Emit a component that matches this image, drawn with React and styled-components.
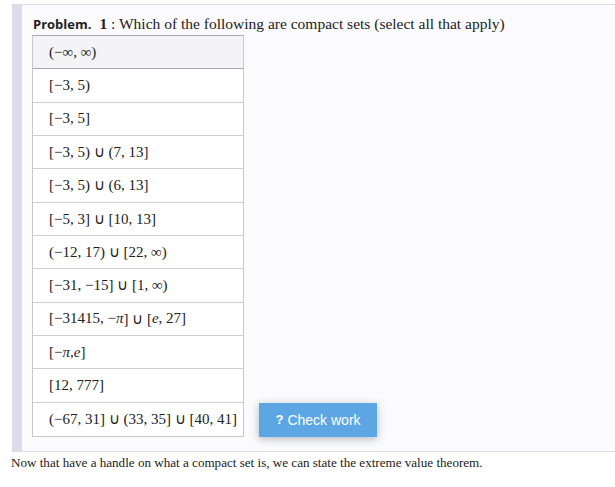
import React from "react";
import styled, { createGlobalStyle } from "styled-components";

const GlobalStyle = createGlobalStyle`
    body {
        margin: 0;
        background: #ffffff;
        font-family: "Liberation Serif", serif;
        color: #222;
    }
`;

// 문제 패널
const Panel = styled.div`
    margin: 4px 0 0 12px;
    background-color: #fbfbfd;
    border-top: 1px solid #dcdcec;
    border-bottom: 1px solid #dcdcec;
    border-left: 10px solid #dcdcec;
    padding: 10px 0 14px 10px;
`;

const Heading = styled.div`
    font-size: 15.5px;
    line-height: 18px;
    margin-bottom: 2px;
    margin-left: 1px;
    color: #222;
`;

const Label = styled.b`
    font-family: "Open Sans", "Liberation Sans", sans-serif;
    font-weight: 700;
    font-size: 13px;
    margin-right: 8px;
`;

const Num = styled.b`
    font-weight: 700;
`;

const Body = styled.div`
    display: flex;
    align-items: flex-end;
    gap: 15px;
`;

const Options = styled.div`
    width: 212px;
    box-sizing: border-box;
    border: 1px solid #c8c8c8;
    border-top-color: #aaa;
`;

const Option = styled.div`
    height: 33.33px;
    box-sizing: border-box;
    display: flex;
    align-items: center;
    padding-left: 16px;
    font-size: 15px;
    background-color: ${(p) => (p.$head ? "#f4f4f7" : "#ffffff")};
    border-bottom: 1px solid ${(p) => (p.$head ? "#aaa" : "#cfcfcf")};
    &:last-child {
        border-bottom: none;
    }
`;

const CheckButton = styled.button`
    width: 118px;
    height: 34px;
    margin-bottom: 0px;
    border: none;
    background-color: #5ca6e4;
    color: #ffffff;
    font-family: "Liberation Sans", Arial, sans-serif;
    font-size: 14px;
    box-shadow: 0 2px 8px rgba(40, 60, 90, 0.35);
    display: flex;
    align-items: center;
    justify-content: center;
    gap: 4px;
    cursor: pointer;
`;

const Q = styled.span`
    font-weight: 700;
    font-size: 13px;
`;

const After = styled.p`
    margin: 3px 0 0 11px;
    font-size: 13.1px;
    color: #222;
`;

const options = [
    <>(−∞, ∞)</>,
    <>[−3, 5)</>,
    <>[−3, 5]</>,
    <>[−3, 5) ∪ (7, 13]</>,
    <>[−3, 5) ∪ (6, 13]</>,
    <>[−5, 3] ∪ [10, 13]</>,
    <>(−12, 17) ∪ [22, ∞)</>,
    <>[−31, −15] ∪ [1, ∞)</>,
    <>[−31415, −<i>π</i>] ∪ [<i>e</i>, 27]</>,
    <>[−<i>π</i>, <i>e</i>]</>,
    <>[12, 777]</>,
    <>(−67, 31] ∪ (33, 35] ∪ [40, 41]</>,
];

const App = () => {
    return (
        <>
            <GlobalStyle />
            <Panel>
                <Heading>
                    <Label>Problem.</Label>
                    <Num>1</Num> : Which of the following are compact sets (select all that apply)
                </Heading>
                <Body>
                    <Options>
                        {options.map((o, i) => (
                            <Option key={i} $head={i === 0}>{o}</Option>
                        ))}
                    </Options>
                    <CheckButton>
                        <Q>?</Q> Check work
                    </CheckButton>
                </Body>
            </Panel>
            <After>
                Now that have a handle on what a compact set is, we can state the extreme value theorem.
            </After>
        </>
    );
};

export default App;
